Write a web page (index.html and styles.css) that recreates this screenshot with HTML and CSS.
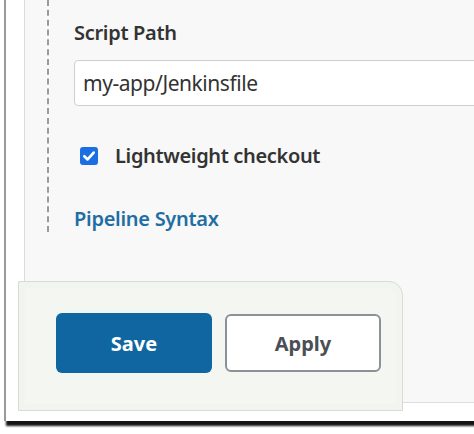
FILE: index.html
```html
<!DOCTYPE html>
<html>
<head>
<meta charset="utf-8">
<link rel="stylesheet" href="styles.css">
</head>
<body>
<div class="frame">
  <div class="panel">
    <div class="section">
      <div class="label">Script Path</div>
      <div class="input">my-app/Jenkinsfile</div>
      <label class="check-row">
        <span class="checkbox">
          <svg viewBox="0 0 18 18" width="18" height="18"><path d="M4.3 9.3 L7.6 12.4 L13.7 5.6" fill="none" stroke="#fff" stroke-width="2.7" stroke-linecap="round" stroke-linejoin="round"/></svg>
        </span>
        <span class="check-label">Lightweight checkout</span>
      </label>
      <a class="link" href="#">Pipeline Syntax</a>
    </div>
  </div>
  <div class="bottom-bar">
    <button class="btn btn-primary">Save</button>
    <button class="btn btn-secondary">Apply</button>
  </div>
</div>
</body>
</html>
```
FILE: styles.css
```css
html, body {
  margin: 0;
  padding: 0;
  background: #ffffff;
  overflow: hidden;
}
body {
  width: 474px;
  height: 434px;
  font-family: "Noto Sans", "Open Sans", sans-serif;
  color: #333;
}
.frame {
  position: relative;
  margin-left: 4px;
  width: 462px;
  height: 421px;
  border-left: 2px solid #9a9a9a;
  border-right: 2px solid #6a6a6a;
  background: #fff;
  box-shadow: 2px 5px 2px rgba(0, 0, 0, 0.92);
  padding-left: 18px;
  box-sizing: content-box;
  display: flex;
  flex-direction: column;
  overflow: visible;
}
.panel {
  height: 403px;
  box-sizing: border-box;
  background: #f8f8f8;
  border-left: 1px solid #dcdcdc;
  border-bottom: 1px solid #dcdcdc;
  padding-left: 22px;
  overflow: hidden;
}
.section {
  border-left: 2px dashed #9a9a9a;
  height: 232px;
  box-sizing: border-box;
  padding-left: 25px;
  padding-top: 19px;
  display: flex;
  flex-direction: column;
}
.label {
  font-size: 20px;
  font-weight: 600;
  letter-spacing: -0.3px;
  line-height: 28px;
  color: #333;
}
.input {
  margin-top: 13px;
  height: 46px;
  width: 440px;
  box-sizing: border-box;
  border: 1px solid #cfcfcf;
  border-radius: 4px;
  background: #fff;
  padding-left: 8px;
  font-size: 21px;
  letter-spacing: -0.45px;
  line-height: 44px;
  color: #333;
  flex-shrink: 0;
}
.check-row {
  margin-top: 41px;
  display: flex;
  align-items: center;
  gap: 17px;
  padding-left: 6px;
  height: 18px;
}
.checkbox {
  width: 18px;
  height: 18px;
  border-radius: 3px;
  background: #1b6fe3;
  display: flex;
  flex-shrink: 0;
}
.check-label {
  font-size: 20px;
  font-weight: 600;
  letter-spacing: -0.35px;
  line-height: 28px;
  color: #333;
}
.link {
  margin-top: 40px;
  font-size: 20px;
  font-weight: 600;
  letter-spacing: -0.28px;
  line-height: 28px;
  color: #1f6ea4;
  text-decoration: none;
  align-self: flex-start;
}
.bottom-bar {
  position: absolute;
  left: 12px;
  top: 281px;
  width: 385px;
  height: 130px;
  box-sizing: border-box;
  background: #f3f6f1;
  border: 1px solid #d6dcd2;
  border-top-right-radius: 14px;
  box-shadow: inset 0 0 0 6px #f2f5ef;
  padding: 31px 0 0 37px;
  display: flex;
  gap: 13px;
  align-items: flex-start;
}
.btn {
  width: 156px;
  height: 60px;
  border-radius: 6px;
  font-family: "Noto Sans", "Open Sans", sans-serif;
  font-size: 20px;
  font-weight: 700;
  cursor: pointer;
  box-sizing: border-box;
}
.btn-primary {
  background: #0f66a0;
  color: #fff;
  border: none;
}
.btn-secondary {
  background: #fff;
  color: #4b4f55;
  border: 2px solid #8c9198;
  margin-top: 1px;
  height: 58px;
}
```
